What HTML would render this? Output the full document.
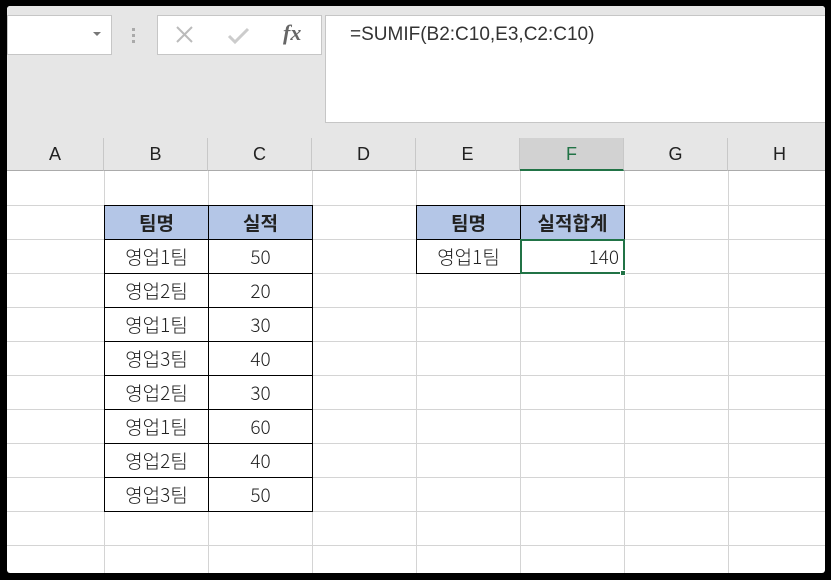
<!DOCTYPE html>
<html><head><meta charset="utf-8"><style>
*{margin:0;padding:0;box-sizing:border-box}
body{width:831px;height:580px;background:#000;position:relative;overflow:hidden;font-family:"Liberation Sans","Noto Sans CJK KR",sans-serif}
.win{position:absolute;left:7px;top:6px;width:818px;height:567px;background:#fff;overflow:hidden;border-radius:3px}
.tb{position:absolute;left:0;top:0;width:818px;height:165px;background:#e6e6e6}
.abs{position:absolute}
.box{position:absolute;background:#fff;border:1px solid #c6c6c6}
.ch{position:absolute;top:132px;height:33px;border-right:1px solid #c8c8c8;font-size:18px;text-align:center;line-height:33px;color:#222;border-bottom:1px solid #ababab}
.hl{position:absolute;left:0;width:818px;height:1px;background:#d4d4d4}
.vl{position:absolute;top:165px;width:1px;height:420px;background:#d4d4d4}
.c{position:absolute;height:35px;width:105px;border:1px solid #000;text-align:center;font-size:19px;line-height:33px;color:#222;font-family:"Noto Sans CJK KR",sans-serif;font-weight:300}
.h{background:#b4c6e7;font-weight:700}
</style></head><body>
<div class="win">
<div class="tb">
 <div class="box" style="left:0;top:9px;width:105px;height:40px"></div>
 <div class="abs" style="left:86px;top:26px;width:0;height:0;border-left:4px solid transparent;border-right:4px solid transparent;border-top:4px solid #777"></div>
 <div class="abs" style="left:125px;top:22px;width:3px;height:3px;background:#aaa;box-shadow:0 6px #aaa,0 12px #aaa"></div>
 <div class="box" style="left:150px;top:9px;width:165px;height:40px"></div>
 <svg class="abs" style="left:167px;top:18px" width="22" height="22"><path d="M3 3L18 18M18 3L3 18" stroke="#bbb" stroke-width="2"/></svg>
 <svg class="abs" style="left:220px;top:20px" width="24" height="20"><path d="M2 10L8 16L21 3" stroke="#ccc" stroke-width="3" fill="none"/></svg>
 <div class="abs" style="left:276px;top:14px;font-family:'Liberation Serif',serif;font-style:italic;font-weight:bold;font-size:22px;color:#666">fx</div>
 <div class="box" style="left:318px;top:9px;width:520px;height:108px"></div>
 <div class="abs" style="left:343px;top:18px;font-size:19px;color:#333">=SUMIF(B2:C10,E3,C2:C10)</div>
 <div class="ch" style="left:0;width:97px">A</div>
 <div class="ch" style="left:97px;width:104px">B</div>
 <div class="ch" style="left:201px;width:104px">C</div>
 <div class="ch" style="left:305px;width:104px">D</div>
 <div class="ch" style="left:409px;width:104px">E</div>
 <div class="ch" style="left:513px;width:104px;background:#d2d2d2;color:#217346;border-bottom:2px solid #217346">F</div>
 <div class="ch" style="left:617px;width:104px">G</div>
 <div class="ch" style="left:721px;width:104px">H</div>
</div>
<div class="hl" style="top:199px"></div><div class="hl" style="top:233px"></div><div class="hl" style="top:267px"></div><div class="hl" style="top:301px"></div><div class="hl" style="top:335px"></div><div class="hl" style="top:369px"></div><div class="hl" style="top:403px"></div><div class="hl" style="top:437px"></div><div class="hl" style="top:471px"></div><div class="hl" style="top:505px"></div><div class="hl" style="top:539px"></div>
<div class="vl" style="left:97px"></div><div class="vl" style="left:201px"></div><div class="vl" style="left:305px"></div><div class="vl" style="left:409px"></div><div class="vl" style="left:513px"></div><div class="vl" style="left:617px"></div><div class="vl" style="left:721px"></div>

<div class="c h" style="left:97px;top:199px">팀명</div><div class="c h" style="left:201px;top:199px">실적</div>
<div class="c" style="left:97px;top:233px">영업1팀</div><div class="c" style="left:201px;top:233px">50</div>
<div class="c" style="left:97px;top:267px">영업2팀</div><div class="c" style="left:201px;top:267px">20</div>
<div class="c" style="left:97px;top:301px">영업1팀</div><div class="c" style="left:201px;top:301px">30</div>
<div class="c" style="left:97px;top:335px">영업3팀</div><div class="c" style="left:201px;top:335px">40</div>
<div class="c" style="left:97px;top:369px">영업2팀</div><div class="c" style="left:201px;top:369px">30</div>
<div class="c" style="left:97px;top:403px">영업1팀</div><div class="c" style="left:201px;top:403px">60</div>
<div class="c" style="left:97px;top:437px">영업2팀</div><div class="c" style="left:201px;top:437px">40</div>
<div class="c" style="left:97px;top:471px">영업3팀</div><div class="c" style="left:201px;top:471px">50</div>

<div class="c h" style="left:409px;top:199px">팀명</div><div class="c h" style="left:513px;top:199px">실적합계</div>
<div class="c" style="left:409px;top:233px">영업1팀</div>
<div class="c" style="left:513px;top:233px;border:2px solid #217346;text-align:right;padding-right:4px;line-height:31px">140</div>
<div class="abs" style="left:613px;top:264px;width:6px;height:6px;background:#217346;border:1px solid #fff"></div>
</div>
</body></html>
